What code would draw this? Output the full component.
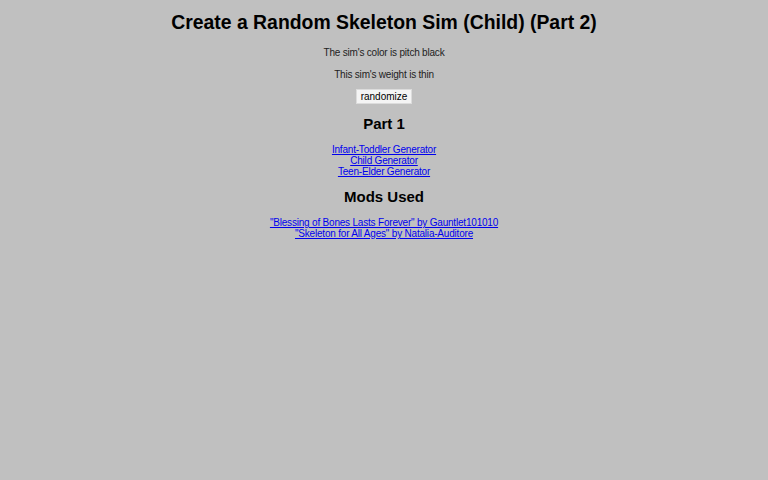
const PART_ONE = ["Infant-Toddler Generator", "Child Generator", "Teen-Elder Generator"];
const MODS = [
  '"Blessing of Bones Lasts Forever" by Gauntlet101010',
  '"Skeleton for All Ages" by Natalia-Auditore',
];

function LinkList({ items }: { items: string[] }) {
  return (
    <ul className="mt-[11px] text-[10px] leading-[11px] tracking-[-0.2px]">
      {items.map((t) => (
        <li key={t}>
          <a href="#" className="text-[#0000ee] underline">{t}</a>
        </li>
      ))}
    </ul>
  );
}

export default function App() {
  return (
    <div className="min-h-[480px] bg-[#c0c0c0] text-center text-black font-['Liberation_Sans',Arial,sans-serif]">
      <h1 className="pt-[11px] text-[19.4px] font-bold leading-[23px]">
        Create a Random Skeleton Sim (Child) (Part 2)
      </h1>
      <p className="mt-[13px] text-[10px] leading-[12px] tracking-[-0.2px] text-[#222]">
        The sim's color is pitch black
      </p>
      <p className="mt-[10px] text-[10px] leading-[12px] tracking-[-0.2px] text-[#222]">
        This sim's weight is thin
      </p>
      <button className="mx-auto mt-[8px] block h-[15px] border border-[#dcdcdc] bg-[#f4f4f4] px-[4px] text-[10px] leading-[13px]">
        randomize
      </button>
      <h2 className="mt-[11px] text-[15px] font-bold leading-[18px]">Part 1</h2>
      <LinkList items={PART_ONE} />
      <h2 className="mt-[11px] text-[15px] font-bold leading-[18px]">Mods Used</h2>
      <LinkList items={MODS} />
    </div>
  );
}
